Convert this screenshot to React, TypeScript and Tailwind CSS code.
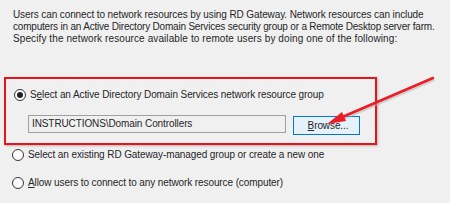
import React from 'react';

// RD Gateway resource policy: network resource page

function Radio({ checked }: { checked?: boolean }) {
  return (
    <span className="flex h-[12px] w-[12px] shrink-0 items-center justify-center rounded-full border border-[#333] bg-white">
      {checked && <span className="h-[6px] w-[6px] rounded-full bg-[#222]" />}
    </span>
  );
}

export default function App() {
  return (
    <div
      className="relative h-[203px] w-[450px] overflow-hidden whitespace-nowrap bg-[#f0f0f0] text-[10px] leading-[12px] tracking-[-0.1px] text-[#262626]"
      style={{ fontFamily: '"Liberation Sans", Arial, sans-serif' }}
    >
      <p className="pl-[13px] pt-[9px]">
        Users can connect to network resources by using RD Gateway. Network resources can include
        <br />
        <span className="tracking-[-0.2px]">
          computers in an Active Directory Domain Services security group or a Remote Desktop server farm.
        </span>
        <br />
        <span className="tracking-[0.1px]">
          Specify the network resource available to remote users by doing one of the following:
        </span>
      </p>

      <div className="ml-[4px] mt-[32px] h-[68px] w-[373px] border-2 border-[#e8141b] shadow-[1px_1px_2px_rgba(0,0,0,0.25)]">
        <div className="flex items-center gap-[4px] pl-[8px] pt-[10px]">
          <Radio checked />
          <span>
            S<span className="underline">e</span>lect an Active Directory Domain Services network resource group
          </span>
        </div>
        <div className="mt-[14px] flex items-start pl-[22px]">
          <div className="flex h-[18px] w-[258px] items-center border border-[#a0a0a0] bg-[#f0f0f0] pl-[3px]">
            INSTRUCTIONS\Domain Controllers
          </div>
          <button className="ml-[7px] mt-[1px] flex h-[19px] w-[67px] items-center justify-center border border-[#0078d7] bg-[#e5f1fb] pl-[3px]">
            <span className="underline">B</span>rowse...
          </button>
        </div>
      </div>

      <div className="flex items-center gap-[4px] pl-[12px] pt-[4px]">
        <Radio />
        <span>Select an existing RD Gateway-managed group or create a new one</span>
      </div>
      <div className="flex items-center gap-[4px] pl-[12px] pt-[16px]">
        <Radio />
        <span>
          <span className="underline">A</span>llow users to connect to any network resource (computer)
        </span>
      </div>

      <svg className="pointer-events-none absolute left-0 top-0" width="450" height="203" viewBox="0 0 450 203">
        <line x1="433" y1="78" x2="340" y2="118" stroke="#b0b0b0" strokeOpacity="0.5" strokeWidth="3" transform="translate(1 1.5)" />
        <line x1="433" y1="78" x2="340" y2="118" stroke="#ee1c24" strokeWidth="2.5" strokeLinecap="round" />
        <polygon points="327,124 342,112 346,121" fill="#ee1c24" />
      </svg>
    </div>
  );
}
